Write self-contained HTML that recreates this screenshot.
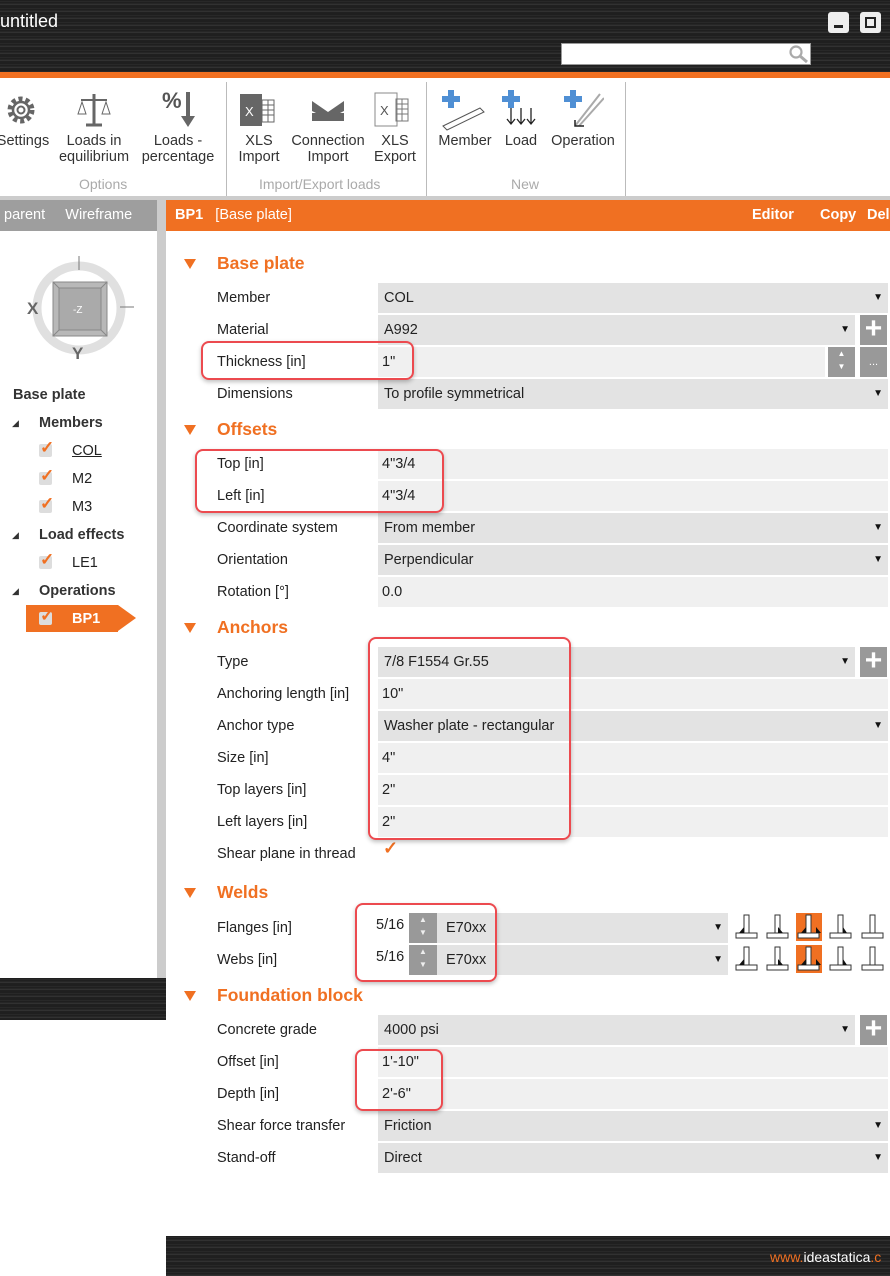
<!DOCTYPE html>
<html><head><meta charset="utf-8"><style>
*{margin:0;padding:0;box-sizing:border-box}
body{width:890px;height:1276px;position:relative;overflow:hidden;background:#fff;font-family:"Liberation Sans",sans-serif;font-size:14.5px;color:#222}
.a{position:absolute}
.dark{background:repeating-linear-gradient(180deg,#1a1a1a 0,#2c2c2c 2px,#111 3px,#3a3a3a 4px,#181818 6px,#262626 7px)}
.lbl{position:absolute;left:217px;font-size:14.5px;color:#222}
.dd{position:absolute;background:#e3e3e3;height:30px;padding-left:6px;line-height:30px}
.in{position:absolute;background:#f0f0f0;height:30px;padding-left:4px;line-height:30px}
.dd:after{content:"▼";position:absolute;right:5px;top:0;font-size:10px;color:#111}
.plus{position:absolute;left:860px;width:27px;height:30px;background:#999;color:#fff;font-size:30px;line-height:28px;text-align:center;font-weight:bold}
.sec{position:absolute;left:217px;color:#f07022;font-size:17.5px;font-weight:bold}
.tri{position:absolute;left:184px;width:0;height:0;border-left:6px solid transparent;border-right:6px solid transparent;border-top:10px solid #f07022}
.red{position:absolute;border:2.5px solid #ec4a4f;border-radius:8px;box-shadow:0 2px 4px rgba(0,0,0,.25)}
.rb{position:absolute;text-align:center;color:#333;font-size:14.5px;line-height:16px}
.grp{position:absolute;top:176px;color:#aaa;font-size:14px}
.tree{position:absolute;font-size:14.5px}
.chk{position:absolute;width:13px;height:13px;background:#ddd;border-radius:2px}
.chk:after{content:"✓";position:absolute;left:1px;top:-6px;color:#f07022;font-size:17px;font-weight:bold}
.wi{position:absolute;width:26px;height:26px}
</style></head><body>
<!-- title bar -->
<div class="a dark" style="left:0;top:0;width:890px;height:72px"></div>
<div class="a" style="left:0;top:11px;color:#fff;font-size:18px">untitled</div>
<div class="a" style="left:828px;top:12px;width:21px;height:21px;background:#eee;border-radius:3px"><div class="a" style="left:6px;top:13px;width:9px;height:3px;background:#222"></div></div>
<div class="a" style="left:860px;top:12px;width:21px;height:21px;background:#eee;border-radius:3px"><div class="a" style="left:5px;top:5px;width:11px;height:11px;border:2px solid #222"></div></div>
<div class="a" style="left:561px;top:43px;width:250px;height:22px;background:#fff;border:1px solid #999"></div>
<svg class="a" style="left:788px;top:44px" width="22" height="20"><circle cx="8" cy="8" r="5.5" fill="none" stroke="#aaa" stroke-width="2.2"/><line x1="12" y1="12" x2="19" y2="18" stroke="#aaa" stroke-width="3"/></svg>
<div class="a" style="left:0;top:72px;width:890px;height:6px;background:#f07022"></div>
<!-- ribbon -->
<div class="a" style="left:0;top:196px;width:890px;height:4px;background:#ccc"></div>
<svg class="a" style="left:4px;top:92px" width="34" height="36"><circle cx="17" cy="18" r="11" fill="none" stroke="#666" stroke-width="5" stroke-dasharray="4 3"/><circle cx="17" cy="18" r="8" fill="none" stroke="#666" stroke-width="2.5"/><circle cx="17" cy="18" r="3.5" fill="none" stroke="#666" stroke-width="2"/></svg>
<svg class="a" style="left:76px;top:92px" width="36" height="36"><line x1="18" y1="2" x2="18" y2="33" stroke="#666" stroke-width="3"/><line x1="5" y1="8" x2="31" y2="8" stroke="#666" stroke-width="2"/><line x1="10" y1="33" x2="26" y2="33" stroke="#666" stroke-width="3"/><path d="M2 22 L6 10 L10 22 Z M26 22 L30 10 L34 22Z" fill="none" stroke="#666"/></svg>
<div class="a" style="left:162px;top:88px;font-size:22px;font-weight:bold;color:#555">%</div>
<svg class="a" style="left:180px;top:92px" width="16" height="36"><line x1="8" y1="0" x2="8" y2="26" stroke="#666" stroke-width="4"/><path d="M1 24 L15 24 L8 35Z" fill="#666"/></svg>
<svg class="a" style="left:240px;top:92px" width="36" height="36"><rect x="0" y="2" width="22" height="32" fill="#666"/><text x="5" y="24" fill="#fff" font-size="13" font-family="Liberation Sans">X</text><rect x="22" y="8" width="12" height="22" fill="none" stroke="#666"/><path d="M22 13H34M22 18H34M22 23H34M28 8V30" stroke="#666"/></svg>
<svg class="a" style="left:310px;top:95px" width="36" height="30"><path d="M2 6 L18 17 L34 6 L34 16 L18 24 L2 16Z" fill="#666"/><rect x="2" y="18" width="32" height="8" fill="#666"/></svg>
<svg class="a" style="left:374px;top:91px" width="36" height="38"><rect x="1" y="2" width="22" height="33" fill="#fff" stroke="#888"/><text x="6" y="24" fill="#555" font-size="13" font-family="Liberation Sans">X</text><rect x="22" y="8" width="12" height="22" fill="none" stroke="#777"/><path d="M22 13H34M22 18H34M22 23H34M28 8V30" stroke="#777"/></svg>
<svg class="a" style="left:440px;top:88px" width="48" height="44"><path d="M8 2h6v6h6v6h-6v6h-6v-6H2v-6h6z" fill="#4f8fd4"/><path d="M3 38 L40 20 L44 24 L7 42Z" fill="#fff" stroke="#555"/></svg>
<svg class="a" style="left:500px;top:88px" width="42" height="40"><path d="M8 2h6v6h6v6h-6v6h-6v-6H2v-6h6z" fill="#4f8fd4"/><path d="M11 20V36M21 20V36M31 20V36M7 31l4 5 4-5M17 31l4 5 4-5M27 31l4 5 4-5" stroke="#222" stroke-width="1.3" fill="none"/></svg>
<svg class="a" style="left:562px;top:88px" width="42" height="40"><path d="M8 2h6v6h6v6h-6v6h-6v-6H2v-6h6z" fill="#4f8fd4"/><path d="M13 38 L38 6 M17 38 L42 10" stroke="#aaa" stroke-width="2"/><path d="M13 32V38H22" stroke="#222" stroke-width="1.5" fill="none"/></svg>
<div class="rb" style="left:-6px;top:133px;width:58px">Settings</div>
<div class="rb" style="left:54px;top:133px;width:80px">Loads in<br>equilibrium</div>
<div class="rb" style="left:138px;top:133px;width:80px">Loads -<br>percentage</div>
<div class="rb" style="left:230px;top:133px;width:58px">XLS<br>Import</div>
<div class="rb" style="left:286px;top:133px;width:84px">Connection<br>Import</div>
<div class="rb" style="left:368px;top:133px;width:54px">XLS<br>Export</div>
<div class="rb" style="left:434px;top:133px;width:62px">Member</div>
<div class="rb" style="left:500px;top:133px;width:42px">Load</div>
<div class="rb" style="left:546px;top:133px;width:74px">Operation</div>
<div class="grp" style="left:79px">Options</div>
<div class="grp" style="left:259px">Import/Export loads</div>
<div class="grp" style="left:511px">New</div>
<div class="a" style="left:226px;top:82px;width:1px;height:114px;background:#bbb"></div>
<div class="a" style="left:426px;top:82px;width:1px;height:114px;background:#bbb"></div>
<div class="a" style="left:625px;top:82px;width:1px;height:114px;background:#bbb"></div>
<!-- header bars -->
<div class="a" style="left:0;top:200px;width:157px;height:31px;background:#9e9e9e;color:#fff;line-height:31px">&nbsp;parent&nbsp;&nbsp;&nbsp;&nbsp;&nbsp;Wireframe</div>
<div class="a" style="left:157px;top:200px;width:9px;height:778px;background:#ccc"></div>
<div class="a" style="left:166px;top:200px;width:724px;height:31px;background:#f07022;color:#fff;line-height:31px"><b style="margin-left:9px">BP1</b>&nbsp;&nbsp;&nbsp;[Base plate]<b class="a" style="left:586px">Editor</b><b class="a" style="left:654px">Copy</b><b class="a" style="left:701px">Del</b></div>
<!-- left panel -->
<svg class="a" style="left:20px;top:252px" width="120" height="110"><circle cx="59" cy="56" r="42" fill="none" stroke="#e0e0e0" stroke-width="9"/><rect x="33" y="30" width="54" height="54" fill="#b8b8b8" stroke="#888"/><rect x="39" y="36" width="42" height="42" fill="#aaa" stroke="#888"/><path d="M33 30L39 36M87 30L81 36M33 84L39 78M87 84L81 78" stroke="#888"/><text x="53" y="61" fill="#fff" font-size="10" font-family="Liberation Sans">-Z</text><line x1="59" y1="4" x2="59" y2="18" stroke="#777"/><line x1="100" y1="55" x2="114" y2="55" stroke="#777"/><text x="7" y="62" fill="#666" font-size="17" font-weight="bold" font-family="Liberation Sans">X</text><text x="52" y="107" fill="#666" font-size="17" font-weight="bold" font-family="Liberation Sans">Y</text></svg>
<div class="tree" style="left:13px;top:387px;font-weight:bold;color:#333">Base plate</div>
<div class="tree" style="left:12px;top:418px;font-size:9px;color:#333">◢</div>
<div class="tree" style="left:39px;top:415px;font-weight:bold;color:#333">Members</div>
<div class="chk" style="left:39px;top:444px"></div><div class="tree" style="left:72px;top:443px;text-decoration:underline">COL</div>
<div class="chk" style="left:39px;top:472px"></div><div class="tree" style="left:72px;top:471px">M2</div>
<div class="chk" style="left:39px;top:500px"></div><div class="tree" style="left:72px;top:499px">M3</div>
<div class="tree" style="left:12px;top:530px;font-size:9px;color:#333">◢</div>
<div class="tree" style="left:39px;top:527px;font-weight:bold;color:#333">Load effects</div>
<div class="chk" style="left:39px;top:556px"></div><div class="tree" style="left:72px;top:555px">LE1</div>
<div class="tree" style="left:12px;top:586px;font-size:9px;color:#333">◢</div>
<div class="tree" style="left:39px;top:583px;font-weight:bold;color:#333">Operations</div>
<div class="a" style="left:26px;top:605px;width:92px;height:27px;background:#f07022"></div>
<div class="a" style="left:118px;top:605px;width:0;height:0;border-top:13.5px solid transparent;border-bottom:13.5px solid transparent;border-left:18px solid #f07022"></div>
<div class="chk" style="left:39px;top:612px"></div><div class="tree" style="left:72px;top:611px;color:#fff;font-weight:bold">BP1</div>
<div class="a dark" style="left:0;top:978px;width:166px;height:42px"></div>
<div class="a dark" style="left:166px;top:1236px;width:724px;height:40px"></div>
<div class="a" style="left:770px;top:1249px;font-size:14px;color:#f07022">www.<span style="color:#fff">ideastatica</span>.c</div>
<!-- sections -->
<div class="tri" style="top:259px"></div><div class="sec" style="top:253px">Base plate</div>
<div class="tri" style="top:425px"></div><div class="sec" style="top:419px">Offsets</div>
<div class="tri" style="top:623px"></div><div class="sec" style="top:617px">Anchors</div>
<div class="tri" style="top:888px"></div><div class="sec" style="top:882px">Welds</div>
<div class="tri" style="top:991px"></div><div class="sec" style="top:985px">Foundation block</div>
<!-- rows -->
<div class="lbl" style="top:290px">Member</div><div class="dd" style="left:378px;top:283px;width:510px">COL</div>
<div class="lbl" style="top:322px">Material</div><div class="dd" style="left:378px;top:315px;width:477px">A992</div><div class="plus" style="top:315px">+</div>
<div class="lbl" style="top:354px">Thickness [in]</div><div class="in" style="left:378px;top:347px;width:447px">1"</div>
<div class="a" style="left:828px;top:347px;width:27px;height:30px;background:#999;color:#fff;font-size:8px;text-align:center;line-height:13px">▲<br>▼</div>
<div class="a" style="left:860px;top:347px;width:27px;height:30px;background:#999;color:#fff;font-size:11px;text-align:center;line-height:30px">...</div>
<div class="lbl" style="top:386px">Dimensions</div><div class="dd" style="left:378px;top:379px;width:510px">To profile symmetrical</div>
<div class="lbl" style="top:456px">Top [in]</div><div class="in" style="left:378px;top:449px;width:510px">4"3/4</div>
<div class="lbl" style="top:488px">Left [in]</div><div class="in" style="left:378px;top:481px;width:510px">4"3/4</div>
<div class="lbl" style="top:520px">Coordinate system</div><div class="dd" style="left:378px;top:513px;width:510px">From member</div>
<div class="lbl" style="top:552px">Orientation</div><div class="dd" style="left:378px;top:545px;width:510px">Perpendicular</div>
<div class="lbl" style="top:584px">Rotation [°]</div><div class="in" style="left:378px;top:577px;width:510px">0.0</div>
<div class="lbl" style="top:654px">Type</div><div class="dd" style="left:378px;top:647px;width:477px">7/8 F1554 Gr.55</div><div class="plus" style="top:647px">+</div>
<div class="lbl" style="top:686px">Anchoring length [in]</div><div class="in" style="left:378px;top:679px;width:510px">10"</div>
<div class="lbl" style="top:718px">Anchor type</div><div class="dd" style="left:378px;top:711px;width:510px">Washer plate - rectangular</div>
<div class="lbl" style="top:750px">Size [in]</div><div class="in" style="left:378px;top:743px;width:510px">4"</div>
<div class="lbl" style="top:782px">Top layers [in]</div><div class="in" style="left:378px;top:775px;width:510px">2"</div>
<div class="lbl" style="top:814px">Left layers [in]</div><div class="in" style="left:378px;top:807px;width:510px">2"</div>
<div class="lbl" style="top:846px">Shear plane in thread</div><div class="a" style="left:383px;top:838px;color:#f07022;font-size:18px;font-weight:bold">✓</div>
<div class="lbl" style="top:920px">Flanges [in]</div><div class="a" style="left:376px;top:917px">5/16</div>
<div class="lbl" style="top:952px">Webs [in]</div><div class="a" style="left:376px;top:949px">5/16</div>
<div class="a" style="left:409px;top:913px;width:28px;height:30px;background:#999;color:#eee;font-size:8px;text-align:center;line-height:13px">▲<br>▼</div>
<div class="a" style="left:409px;top:945px;width:28px;height:30px;background:#999;color:#eee;font-size:8px;text-align:center;line-height:13px">▲<br>▼</div>
<div class="dd" style="left:437px;top:913px;width:291px;padding-left:9px">E70xx</div>
<div class="dd" style="left:437px;top:945px;width:291px;padding-left:9px">E70xx</div>
<svg class="a" style="left:731px;top:913px" width="158" height="62">
<defs><g id="w"><rect x="11" y="2" width="5" height="18" fill="#fff" stroke="#333"/><rect x="3" y="20" width="21" height="5" fill="#fff" stroke="#333"/></g></defs>
<g><use href="#w" x="2"/><path d="M8 20L13 14V20Z" fill="#111"/></g>
<g><use href="#w" x="33"/><path d="M52 20L47 14V20Z" fill="#111"/></g>
<rect x="65" y="0" width="26" height="28" fill="#f07022"/><g><use href="#w" x="64"/><path d="M70 20L75 14V20ZM90 20L85 14V20Z" fill="#111"/></g>
<g><use href="#w" x="96"/><path d="M112 20V14L116 20Z" fill="#111"/></g>
<use href="#w" x="128"/>
<g transform="translate(0,32)"><use href="#w" x="2"/><path d="M8 20L13 14V20Z" fill="#111"/><use href="#w" x="33"/><path d="M52 20L47 14V20Z" fill="#111"/><rect x="65" y="0" width="26" height="28" fill="#f07022"/><use href="#w" x="64"/><path d="M70 20L75 14V20ZM90 20L85 14V20Z" fill="#111"/><use href="#w" x="96"/><path d="M112 20V14L116 20Z" fill="#111"/><use href="#w" x="128"/></g>
</svg>
<div class="lbl" style="top:1022px">Concrete grade</div><div class="dd" style="left:378px;top:1015px;width:477px">4000 psi</div><div class="plus" style="top:1015px">+</div>
<div class="lbl" style="top:1054px">Offset [in]</div><div class="in" style="left:378px;top:1047px;width:510px">1'-10"</div>
<div class="lbl" style="top:1086px">Depth [in]</div><div class="in" style="left:378px;top:1079px;width:510px">2'-6"</div>
<div class="lbl" style="top:1118px">Shear force transfer</div><div class="dd" style="left:378px;top:1111px;width:510px">Friction</div>
<div class="lbl" style="top:1150px">Stand-off</div><div class="dd" style="left:378px;top:1143px;width:510px">Direct</div>
<!-- red boxes -->
<div class="red" style="left:201px;top:341px;width:213px;height:39px"></div>
<div class="red" style="left:195px;top:449px;width:249px;height:64px"></div>
<div class="red" style="left:368px;top:637px;width:203px;height:203px"></div>
<div class="red" style="left:355px;top:903px;width:142px;height:79px"></div>
<div class="red" style="left:355px;top:1049px;width:88px;height:62px"></div>
</body></html>
